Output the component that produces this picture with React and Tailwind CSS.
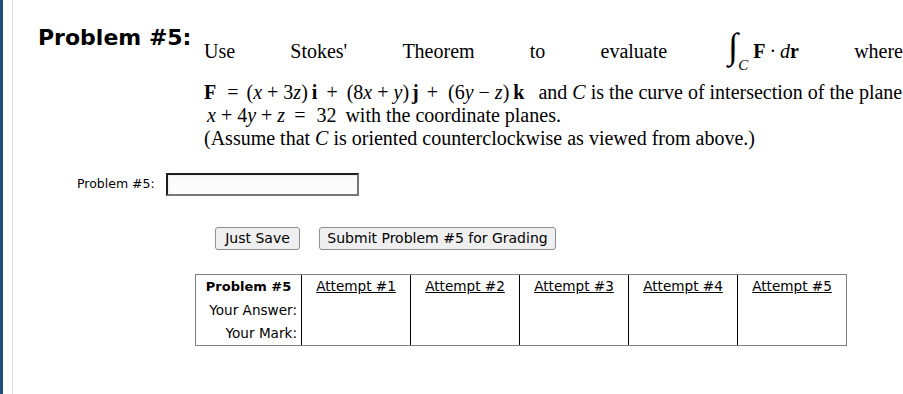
import React from 'react';

const sans = { fontFamily: '"DejaVu Sans", Verdana, sans-serif' };

function ProblemText() {
  return (
    <div className="min-w-0 flex-1 text-[20px] leading-[23px] text-black" style={{ fontFamily: '"Liberation Serif", "Times New Roman", serif' }}>
      {/* first line is justified across the full width */}
      <div className="mt-[3px] flex h-[31px] items-baseline justify-between whitespace-nowrap">
        <span>Use</span>
        <span>Stokes'</span>
        <span>Theorem</span>
        <span>to</span>
        <span>evaluate</span>
        <span className="ml-[6px]">
          <span className="text-[36px] leading-none">∫</span>
          <span className="align-[-12px] text-[15px] italic">C</span>
          <b className="ml-[5px]">F</b>
          <span className="mx-[4px]">·</span>
          <i>d</i>
          <b>r</b>
        </span>
        <span>where</span>
      </div>

      <div className="mt-[22px] whitespace-nowrap">
        <b>F</b>
        <span className="ml-[11px]">=</span>
        <span className="ml-[8px]">(<i>x</i> + 3<i>z</i>)</span>
        <b className="ml-[4px]">i</b>
        <span className="ml-[9px]">+</span>
        <span className="ml-[9px]">(8<i>x</i> + <i>y</i>)</span>
        <b className="ml-[3px]">j</b>
        <span className="ml-[8px]">+</span>
        <span className="ml-[10px]">(6<i>y</i> − <i>z</i>)</span>
        <b className="ml-[4px]">k</b>
        <span className="ml-[14px]">and <i>C</i> is the curve of intersection of the plane</span>
      </div>
      <div className="whitespace-nowrap pl-[3px]">
        <i>x</i> + 4<i>y</i> + <i>z</i>
        <span className="ml-[9px]">=</span>
        <span className="ml-[11px]">32</span>
        <span className="ml-[9px]">with the coordinate planes.</span>
      </div>
      <div className="whitespace-nowrap">
        (Assume that <i>C</i> is oriented counterclockwise as viewed from above.)
      </div>
    </div>
  );
}

function AttemptsTable() {
  const attempts = [1, 2, 3, 4, 5];
  return (
    <table className="border-separate border-spacing-0 border border-[#808080] text-[13.6px] text-black" style={sans}>
      <tbody>
        <tr>
          <td className="h-[23px] w-[105px] p-0 text-center text-[13px] font-bold leading-[23px]">Problem #5</td>
          {attempts.map(n => (
            <td key={n} className="h-[23px] w-[109px] border-l border-black p-0 text-center leading-[23px]">
              <a href="#" className="text-black underline">Attempt #{n}</a>
            </td>
          ))}
        </tr>
        <tr>
          <td className="h-[24px] p-0 pr-[4px] text-right leading-[24px]">Your Answer:</td>
          {attempts.map(n => (
            <td key={n} className="h-[24px] border-l border-black p-0" />
          ))}
        </tr>
        <tr>
          <td className="h-[23px] p-0 pr-[4px] text-right leading-[23px]">Your Mark:</td>
          {attempts.map(n => (
            <td key={n} className="h-[23px] border-l border-black p-0" />
          ))}
        </tr>
      </tbody>
    </table>
  );
}

export default function App() {
  return (
    <div className="flex h-screen w-full overflow-hidden bg-white">
      <div className="w-[3px] shrink-0 bg-[#1c4d7d]" />
      <div className="w-[9px] shrink-0" />
      <div className="w-px shrink-0 bg-[#dcdcdc]" />

      <div className="min-w-0 flex-1">
        <div className="flex items-start pt-[25px] pl-[25px]">
          <h2 className="w-[166px] shrink-0 text-[22px] font-bold leading-[26px] text-black" style={sans}>
            Problem #5:
          </h2>
          <ProblemText />
        </div>

        <div className="mt-[23px] flex items-center pl-[64px]" style={sans}>
          <label className="w-[89px] text-[12.5px] text-black">Problem #5:</label>
          <input
            type="text"
            className="h-[23px] w-[193px] border-2 border-t-[#1e1e1e] border-l-[#1e1e1e] border-r-[#767676] border-b-[#767676] bg-[#fcfcfc] shadow-[inset_1px_1px_2px_rgba(0,0,0,0.08)] outline-none"
          />
        </div>

        <div className="mt-[31px] flex gap-[19px] pl-[202px]" style={sans}>
          <button className="h-[23px] w-[85px] rounded-[3px] border border-[#8f8f8f] bg-[#efefef] text-[14px] text-black">
            Just Save
          </button>
          <button className="h-[23px] w-[237px] rounded-[3px] border border-[#8f8f8f] bg-[#efefef] text-[14px] text-black">
            Submit Problem #5 for Grading
          </button>
        </div>

        <div className="mt-[24px] pl-[182px]">
          <AttemptsTable />
        </div>
      </div>
    </div>
  );
}
